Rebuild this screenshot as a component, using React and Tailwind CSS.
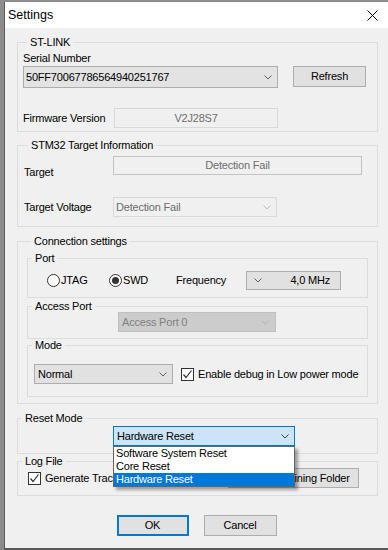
import React from 'react';

const font = { fontFamily: '"Liberation Sans", Arial, sans-serif' };

function Chevron({ color = '#606060' }) {
  return (
    <svg width="8" height="5" viewBox="0 0 8 5" className="shrink-0">
      <polyline points="0.5,0.5 4,4 7.5,0.5" fill="none" stroke={color} strokeWidth="1" />
    </svg>
  );
}

function Group({ label, className = '', children }) {
  return (
    <fieldset className={`border border-[#dcdcdc] min-w-0 ${className}`}>
      <legend className="ml-[4px] px-[3px] leading-[13px]">{label}</legend>
      {children}
    </fieldset>
  );
}

function Radio({ checked, label }) {
  return (
    <div className="flex items-center">
      <span className="w-[13px] h-[13px] rounded-full border border-[#333] bg-white flex items-center justify-center">
        {checked && <span className="w-[7px] h-[7px] rounded-full bg-[#333]" />}
      </span>
      <span className="ml-[1px]">{label}</span>
    </div>
  );
}

function Checkbox() {
  return (
    <span className="w-[13px] h-[13px] border border-[#333] bg-white flex items-center justify-center shrink-0">
      <svg width="11" height="11" viewBox="0 0 11 11">
        <polyline points="1.5,5.5 4,8.5 9.5,1.5" fill="none" stroke="#333" strokeWidth="1.2" />
      </svg>
    </span>
  );
}

export default function App() {
  return (
    <div
      className="w-[388px] h-[550px] bg-[#8c8c8c] pt-[2px] pl-[4px] overflow-hidden text-[11px] tracking-[-0.2px] text-black"
      style={font}
    >
      <div className="h-[548px] border-l border-b-2 border-[#5a5a5a] flex flex-col">
        {/* title bar */}
        <div className="h-[26px] bg-white flex items-center pl-[3px] pr-[10px]">
          <span className="text-[12.5px] tracking-normal">Settings</span>
          <svg width="11" height="11" viewBox="0 0 11 11" className="ml-auto">
            <path d="M0.5 0.5 L10.5 10.5 M10.5 0.5 L0.5 10.5" stroke="#000" strokeWidth="1" />
          </svg>
        </div>

        <div className="flex-1 bg-[#f0f0f0] pl-[12px] pr-[10px] pt-[8px] flex flex-col">
          <Group label="ST-LINK" className="pl-[5px] pb-[3px]">
            <div className="mt-[3px] h-[13px] leading-[13px]">Serial Number</div>
            <div className="mt-[1px] flex items-start">
              <div className="w-[255px] h-[22px] bg-[#e3e3e3] border border-[#adadad] flex items-center pl-[2px] pr-[5px]">
                <span className="flex-1">50FF70067786564940251767</span>
                <Chevron />
              </div>
              <button className="ml-[15px] w-[73px] h-[21px] bg-[#e1e1e1] border border-[#adadad]">Refresh</button>
            </div>
            <div className="mt-[20px] h-[20px] flex items-center">
              <span className="w-[91px]">Firmware Version</span>
              <div className="w-[164px] h-[20px] border border-[#d9d9d9] bg-[#f0f0f0] flex items-center justify-center text-[#6d6d6d]">
                V2J28S7
              </div>
            </div>
          </Group>

          <Group label="STM32 Target Information" className="mt-[7px] pl-[6px] pb-[9px]">
            <div className="mt-[4px] flex items-start">
              <span className="mt-[10px] w-[89px] leading-[13px]">Target</span>
              <div className="w-[249px] h-[19px] border border-[#c4c4c4] bg-[#f0f0f0] flex items-center justify-center text-[#6d6d6d]">
                Detection Fail
              </div>
            </div>
            <div className="mt-[18px] h-[20px] flex items-center">
              <span className="w-[89px]">Target Voltage</span>
              <div className="w-[164px] h-[20px] border border-[#d9d9d9] bg-[#f0f0f0] flex items-center pl-[2px] pr-[5px] text-[#6d6d6d]">
                <span className="flex-1">Detection Fail</span>
                <Chevron color="#bcbcbc" />
              </div>
            </div>
          </Group>

          <Group label="Connection settings" className="mt-[8px] px-[9px] pb-[6px]">
            <Group label="Port" className="mt-[4px] pb-[7px]">
              <div className="mt-[5px] h-[20px] flex items-center pl-[19px]">
                <div className="w-[62px]">
                  <Radio label="JTAG" />
                </div>
                <div className="w-[67px]">
                  <Radio checked label="SWD" />
                </div>
                <span className="w-[70px]">Frequency</span>
                <div className="w-[95px] h-[19px] bg-[#e1e1e1] border border-[#adadad] flex items-center pl-[7px] pr-[10px]">
                  <Chevron />
                  <span className="ml-auto">4,0 MHz</span>
                </div>
              </div>
            </Group>

            <Group label="Access Port" className="mt-[2px] pb-[6px]">
              <div className="-mt-[1px] ml-[90px] w-[158px] h-[20px] bg-[#cccccc] border border-[#bfbfbf] flex items-center pl-[3px] pr-[6px] text-[#808080]">
                <span className="flex-1">Access Port 0</span>
                <Chevron color="#b4b4b4" />
              </div>
            </Group>

            <Group label="Mode" className="pb-[12px]">
              <div className="mt-[12px] h-[20px] flex items-center pl-[6px]">
                <div className="w-[139px] h-[20px] bg-[#e1e1e1] border border-[#adadad] flex items-center pl-[3px] pr-[5px]">
                  <span className="flex-1">Normal</span>
                  <Chevron />
                </div>
                <div className="ml-[8px]">
                  <Checkbox />
                </div>
                <span className="ml-[4px]">Enable debug in Low power mode</span>
              </div>
            </Group>
          </Group>

          <Group label="Reset Mode" className="mt-[8px] pb-[7px] relative z-10">
            <div className="mt-[1px] ml-[95px] w-[182px] relative">
              <div className="h-[20px] bg-[#cce4f7] border border-[#0078d7] flex items-center pl-[3px] pr-[5px]">
                <span className="flex-1">Hardware Reset</span>
                <Chevron color="#404040" />
              </div>
              <div className="absolute left-0 top-full w-[182px] bg-white border border-[#646464] shadow-[3px_3px_3px_rgba(0,0,0,0.35)] flex flex-col">
                <div className="h-[13px] leading-[13px] pl-[2px]">Software System Reset</div>
                <div className="h-[13px] leading-[13px] pl-[2px]">Core Reset</div>
                <div className="h-[13px] leading-[13px] pl-[2px] bg-[#0078d7] text-white">Hardware Reset</div>
              </div>
            </div>
          </Group>

          <Group label="Log File" className="mt-[1px] pb-[7px]">
            <div className="h-[20px] flex items-center pl-[10px] pr-[18px]">
              <Checkbox />
              {/* label runs under the open list; clip it where the list starts */}
              <span className="ml-[4px] w-[69px] overflow-hidden whitespace-nowrap">Generate Trace Log File</span>
              <button className="ml-auto w-[131px] h-[20px] bg-[#e1e1e1] border border-[#adadad] whitespace-nowrap overflow-hidden">
                Open Containing Folder
              </button>
            </div>
          </Group>

          <div className="mt-[19px] flex justify-center gap-[15px] pr-[2px]">
            <button className="w-[72px] h-[21px] bg-[#e1e1e1] border-2 border-[#0078d7]">OK</button>
            <button className="w-[73px] h-[21px] bg-[#e1e1e1] border border-[#adadad]">Cancel</button>
          </div>
        </div>
      </div>
    </div>
  );
}
